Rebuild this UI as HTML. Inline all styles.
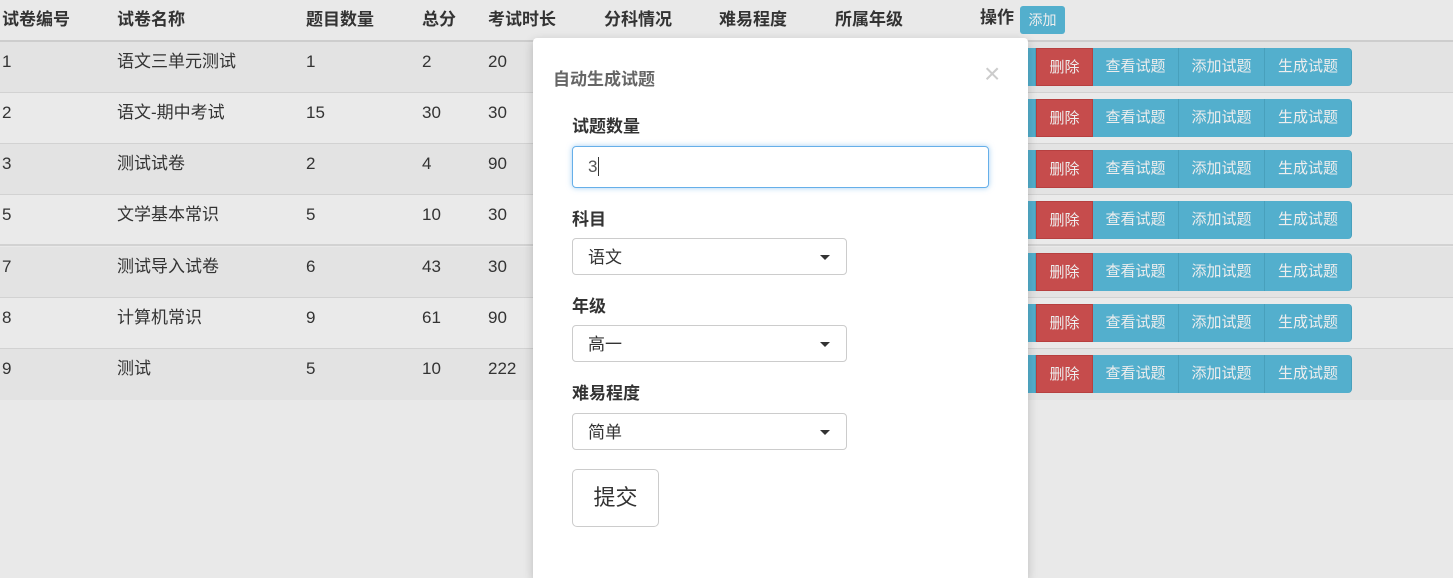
<!DOCTYPE html>
<html><head><meta charset="utf-8"><style>
*{box-sizing:border-box;margin:0;padding:0}
body{width:1453px;height:571px;overflow:hidden;background:#e9e9e9;font-family:"Liberation Sans","Noto Sans CJK SC",sans-serif;font-size:16px;color:#333;position:relative;line-height:20px}
.h{position:absolute;top:0;left:0;width:1453px;height:42px;border-bottom:2px solid #cdcdcd}
.h span{position:absolute;top:10px;font-weight:bold;font-size:17px;color:#333;line-height:20px}
.r{position:absolute;left:0;width:1453px;height:51px;border-bottom:1px solid #d2d2d2}
.r.o{background:#e3e3e3}.r.e{background:#eaeaea}
.r span{position:absolute;top:10px;font-size:17px;color:#333;line-height:20px}
.b{position:absolute;top:6px;height:38px;color:#eee;font-size:15px;text-align:center;line-height:38px;background:#53afcd;border-right:1px solid #48a0bc}
.b.d{background:#c64c4c;border:1px solid #b64040}
.add{position:absolute;left:1020px;top:6px;width:45px;height:28px;background:#53afcd;border-radius:3px;color:#eee;font-size:14px;line-height:28px;text-align:center}
.m{position:absolute;left:533px;top:38px;width:495px;height:540px;background:#fff;border-radius:4px 4px 0 0;box-shadow:0 3px 10px rgba(0,0,0,.2)}
.m .t{position:absolute;left:20px;top:32px;font-size:17px;font-weight:bold;color:#666}
.m .x{position:absolute;left:451px;top:26px;font-size:28px;color:#ccc;font-weight:300}
.m label{position:absolute;left:39px;font-weight:bold;font-size:17px;color:#333}
.inp{position:absolute;left:39px;top:108px;width:417px;height:42px;border:1px solid #66afe9;border-radius:4px;box-shadow:0 0 6px rgba(102,175,233,.6);padding:10px 15px;font-size:17px;color:#555}
.sel{position:absolute;left:39px;width:275px;height:37px;border:1px solid #ccc;border-radius:4px;padding:9px 15px;font-size:17px;color:#333}
.sel:after{content:"";position:absolute;right:16px;top:16px;border-left:5px solid transparent;border-right:5px solid transparent;border-top:5px solid #333}
.sub{position:absolute;left:39px;top:431px;width:87px;height:58px;border:1px solid #ccc;border-radius:5px;font-size:22px;line-height:56px;text-align:center;color:#333}
</style></head><body>
<div class="h">
<span style="left:2px">试卷编号</span><span style="left:117px">试卷名称</span><span style="left:306px">题目数量</span><span style="left:422px">总分</span><span style="left:488px">考试时长</span><span style="left:604px">分科情况</span><span style="left:719px">难易程度</span><span style="left:835px">所属年级</span><span style="left:980px;top:8px">操作</span>
</div>
<div class="add">添加</div>

<div class="r o" style="top:42px"><span style="left:2px">1</span><span style="left:117px">语文三单元测试</span><span style="left:306px">1</span><span style="left:422px">2</span><span style="left:488px">20</span>
<div class="b" style="left:1000px;width:36px"></div><div class="b d" style="left:1036px;width:57px">删除</div><div class="b" style="left:1093px;width:86px">查看试题</div><div class="b" style="left:1179px;width:86px">添加试题</div><div class="b" style="left:1265px;width:87px;border-radius:0 4px 4px 0">生成试题</div></div>
<div class="r e" style="top:93px"><span style="left:2px">2</span><span style="left:117px">语文-期中考试</span><span style="left:306px">15</span><span style="left:422px">30</span><span style="left:488px">30</span>
<div class="b" style="left:1000px;width:36px"></div><div class="b d" style="left:1036px;width:57px">删除</div><div class="b" style="left:1093px;width:86px">查看试题</div><div class="b" style="left:1179px;width:86px">添加试题</div><div class="b" style="left:1265px;width:87px;border-radius:0 4px 4px 0">生成试题</div></div>
<div class="r o" style="top:144px"><span style="left:2px">3</span><span style="left:117px">测试试卷</span><span style="left:306px">2</span><span style="left:422px">4</span><span style="left:488px">90</span>
<div class="b" style="left:1000px;width:36px"></div><div class="b d" style="left:1036px;width:57px">删除</div><div class="b" style="left:1093px;width:86px">查看试题</div><div class="b" style="left:1179px;width:86px">添加试题</div><div class="b" style="left:1265px;width:87px;border-radius:0 4px 4px 0">生成试题</div></div>
<div class="r e" style="top:195px;border-bottom:2px solid #d2d2d2"><span style="left:2px">5</span><span style="left:117px">文学基本常识</span><span style="left:306px">5</span><span style="left:422px">10</span><span style="left:488px">30</span>
<div class="b" style="left:1000px;width:36px"></div><div class="b d" style="left:1036px;width:57px">删除</div><div class="b" style="left:1093px;width:86px">查看试题</div><div class="b" style="left:1179px;width:86px">添加试题</div><div class="b" style="left:1265px;width:87px;border-radius:0 4px 4px 0">生成试题</div></div>
<div class="r o" style="top:247px"><span style="left:2px">7</span><span style="left:117px">测试导入试卷</span><span style="left:306px">6</span><span style="left:422px">43</span><span style="left:488px">30</span>
<div class="b" style="left:1000px;width:36px"></div><div class="b d" style="left:1036px;width:57px">删除</div><div class="b" style="left:1093px;width:86px">查看试题</div><div class="b" style="left:1179px;width:86px">添加试题</div><div class="b" style="left:1265px;width:87px;border-radius:0 4px 4px 0">生成试题</div></div>
<div class="r e" style="top:298px"><span style="left:2px">8</span><span style="left:117px">计算机常识</span><span style="left:306px">9</span><span style="left:422px">61</span><span style="left:488px">90</span>
<div class="b" style="left:1000px;width:36px"></div><div class="b d" style="left:1036px;width:57px">删除</div><div class="b" style="left:1093px;width:86px">查看试题</div><div class="b" style="left:1179px;width:86px">添加试题</div><div class="b" style="left:1265px;width:87px;border-radius:0 4px 4px 0">生成试题</div></div>
<div class="r o" style="top:349px;border-bottom:none"><span style="left:2px">9</span><span style="left:117px">测试</span><span style="left:306px">5</span><span style="left:422px">10</span><span style="left:488px">222</span>
<div class="b" style="left:1000px;width:36px"></div><div class="b d" style="left:1036px;width:57px">删除</div><div class="b" style="left:1093px;width:86px">查看试题</div><div class="b" style="left:1179px;width:86px">添加试题</div><div class="b" style="left:1265px;width:87px;border-radius:0 4px 4px 0">生成试题</div></div>

<div class="m">
<div class="t">自动生成试题</div><div class="x">×</div>
<label style="top:79px">试题数量</label>
<div class="inp">3<span style="border-left:1px solid #333;margin-left:1px"></span></div>
<label style="top:172px">科目</label>
<div class="sel" style="top:200px">语文</div>
<label style="top:259px">年级</label>
<div class="sel" style="top:287px">高一</div>
<label style="top:346px">难易程度</label>
<div class="sel" style="top:375px">简单</div>
<div class="sub">提交</div>
</div>
</body></html>
